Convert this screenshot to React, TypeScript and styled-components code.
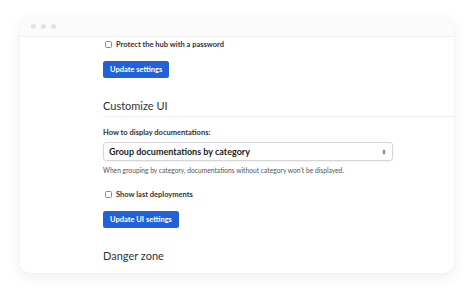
import React from "react";
import styled, { createGlobalStyle } from "styled-components";

const Global = createGlobalStyle`
  html, body { margin: 0; padding: 0; background: #ffffff; }
  body { font-family: Lato, "Noto Sans", sans-serif; color: #333; }
  * { box-sizing: border-box; }
`;

const Page = styled.div`
  width: 474px;
  height: 297px;
  padding: 17px 20px 0 20px;
  overflow: hidden;
`;

const Window = styled.div`
  width: 434px;
  height: 256px;
  border-radius: 10px;
  background: #fff;
  box-shadow: 0 4px 14px rgba(0, 0, 0, 0.07), 0 0 2px rgba(0, 0, 0, 0.04);
  overflow: hidden;
  display: flex;
  flex-direction: column;
`;

const TitleBar = styled.div`
  height: 20px;
  flex: none;
  background: #fbfbfb;
  border-bottom: 1px solid #f1f1f1;
  display: flex;
  align-items: center;
  gap: 5px;
  padding-left: 11px;
`;

const Dot = styled.span`
  width: 5px;
  height: 5px;
  border-radius: 50%;
  background: #e3e3e3;
`;

const Content = styled.div`
  padding-left: 83px;
  display: flex;
  flex-direction: column;
  align-items: flex-start;
`;

const CheckRow = styled.label<{ $mt: number }>`
  display: flex;
  align-items: center;
  gap: 4px;
  height: 14px;
  margin-top: ${(p) => p.$mt}px;
  font-size: 7.5px;
  font-weight: 700;
  color: #333;
`;

const Box = styled.span`
  width: 7px;
  height: 7px;
  border: 1px solid #8a8a8a;
  border-radius: 1.5px;
  background: #fff;
  margin-left: 2px;
`;

const Button = styled.button<{ $mt: number }>`
  margin-top: ${(p) => p.$mt}px;
  height: 17px;
  padding: 0 7px;
  border: none;
  border-radius: 2.5px;
  background: #2262d8;
  color: #fff;
  font-family: Lato, "Noto Sans", sans-serif;
  font-size: 7.5px;
  font-weight: 700;
  line-height: 17px;
`;

const Heading = styled.h2<{ $divider?: boolean }>`
  margin: 21px 0 0 0;
  font-size: 11px;
  font-weight: 400;
  line-height: 14px;
  color: #333;
  align-self: stretch;
  padding-bottom: ${(p) => (p.$divider ? 3 : 0)}px;
  border-bottom: ${(p) => (p.$divider ? "1px solid #eeeeee" : "none")};
`;

const Label = styled.div`
  margin-top: 11px;
  font-size: 7.5px;
  font-weight: 700;
  line-height: 10px;
  color: #333;
`;

const Select = styled.div`
  margin-top: 4px;
  width: 290px;
  height: 19px;
  border: 1px solid #d6d6d6;
  border-radius: 3px;
  box-shadow: 0 1px 2px rgba(0, 0, 0, 0.06);
  display: flex;
  align-items: center;
  justify-content: space-between;
  padding: 0 6px 0 5px;
  font-size: 9px;
  font-weight: 700;
  color: #222;
`;

const Help = styled.div`
  margin-top: 5px;
  font-size: 6.7px;
  line-height: 9px;
  color: #555;
`;

export default function App() {
  return (
    <>
      <Global />
      <Page>
        <Window>
          <TitleBar>
            <Dot />
            <Dot />
            <Dot />
          </TitleBar>
          <Content>
            <CheckRow $mt={0}>
              <Box />
              Protect the hub with a password
            </CheckRow>
            <Button $mt={10}>Update settings</Button>
            <Heading $divider>Customize UI</Heading>
            <Label>How to display documentations:</Label>
            <Select>
              <span>Group documentations by category</span>
              <svg width="4" height="6" viewBox="0 0 4 6">
                <path d="M0.4 2.4 L2 0.6 L3.6 2.4 Z" fill="#444" />
                <path d="M0.4 3.6 L2 5.4 L3.6 3.6 Z" fill="#444" />
              </svg>
            </Select>
            <Help>
              When grouping by category, documentations without category won't be displayed.
            </Help>
            <CheckRow $mt={12}>
              <Box />
              Show last deployments
            </CheckRow>
            <Button $mt={10}>Update UI settings</Button>
            <Heading>Danger zone</Heading>
          </Content>
        </Window>
      </Page>
    </>
  );
}
